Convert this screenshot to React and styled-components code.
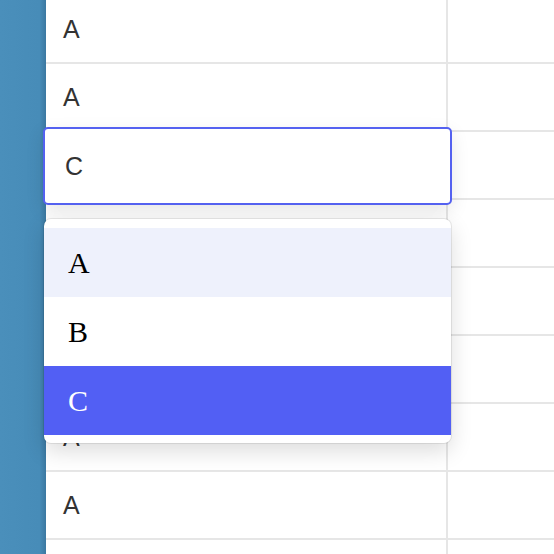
import styled, { createGlobalStyle } from 'styled-components';

const GlobalStyle = createGlobalStyle`
  html, body {
    margin: 0;
    padding: 0;
    background: #fff;
    overflow: hidden;
  }
`;

// row 3 is being edited, so its own text sits under the editor
const rows = ['A', 'A', '', 'A', 'A', 'A', 'A', 'A', ''];
const options = ['A', 'B', 'C'];

export default function App() {
  const selected = 'C';
  const hovered = 'A';

  return (
    <Page>
      <GlobalStyle />
      <Sidebar />
      <Sheet>
        <Rows>
          {rows.map((value, index) => (
            <Row key={index}>
              <Cell>{value}</Cell>
              <Cell $last />
            </Row>
          ))}
        </Rows>

        {/* Editing cell with its option list */}
        <Editor>{selected}</Editor>
        <Dropdown>
          {options.map((opt) => (
            <Option key={opt} $selected={opt === selected} $hover={opt === hovered}>
              {opt}
            </Option>
          ))}
        </Dropdown>
      </Sheet>
    </Page>
  );
}

const Page = styled.div`
  display: flex;
  height: 554px;
  overflow: hidden;
`;

const Sidebar = styled.div`
  width: 46px;
  flex-shrink: 0;
  background: linear-gradient(to right, #4a8fbb 0%, #478cb8 86%, #3b78a1 100%);
`;

const Sheet = styled.div`
  flex: 1;
  position: relative;
`;

const Rows = styled.div`
  margin-top: -4px;
`;

const Row = styled.div`
  display: grid;
  grid-template-columns: 402px 1fr;
  height: 68px;
  box-sizing: border-box;
  border-bottom: 2px solid #e6e6e6;
`;

const Cell = styled.div`
  display: flex;
  align-items: center;
  padding-left: 17px;
  border-right: ${(p) => (p.$last ? 'none' : '2px solid #e6e6e6')};
  font-family: 'Liberation Sans', Arial, sans-serif;
  font-size: 25px;
  color: #333;
`;

const Editor = styled.div`
  position: absolute;
  left: -3px;
  top: 127px;
  width: 409px;
  height: 78px;
  box-sizing: border-box;
  border: 2px solid #5461f0;
  border-radius: 5px;
  background: #fff;
  display: flex;
  align-items: center;
  padding-left: 20px;
  font-family: 'Liberation Sans', Arial, sans-serif;
  font-size: 25px;
  color: #333;
  box-shadow: 0 6px 18px rgba(0, 0, 0, 0.1);
`;

const Dropdown = styled.div`
  position: absolute;
  left: -2px;
  top: 219px;
  width: 407px;
  box-sizing: border-box;
  padding: 9px 0 8px;
  background: #fff;
  border-radius: 7px;
  overflow: hidden;
  box-shadow: 0 0 0 1px rgba(0, 0, 0, 0.08), 0 8px 22px rgba(0, 0, 0, 0.14);
`;

const Option = styled.div`
  height: 69px;
  display: flex;
  align-items: center;
  padding-left: 24px;
  font-family: 'Liberation Serif', 'Times New Roman', serif;
  font-size: 30px;
  color: ${(p) => (p.$selected ? '#fff' : '#000')};
  background: ${(p) => (p.$selected ? '#525ff4' : p.$hover ? '#eef1fc' : '#fff')};
`;
